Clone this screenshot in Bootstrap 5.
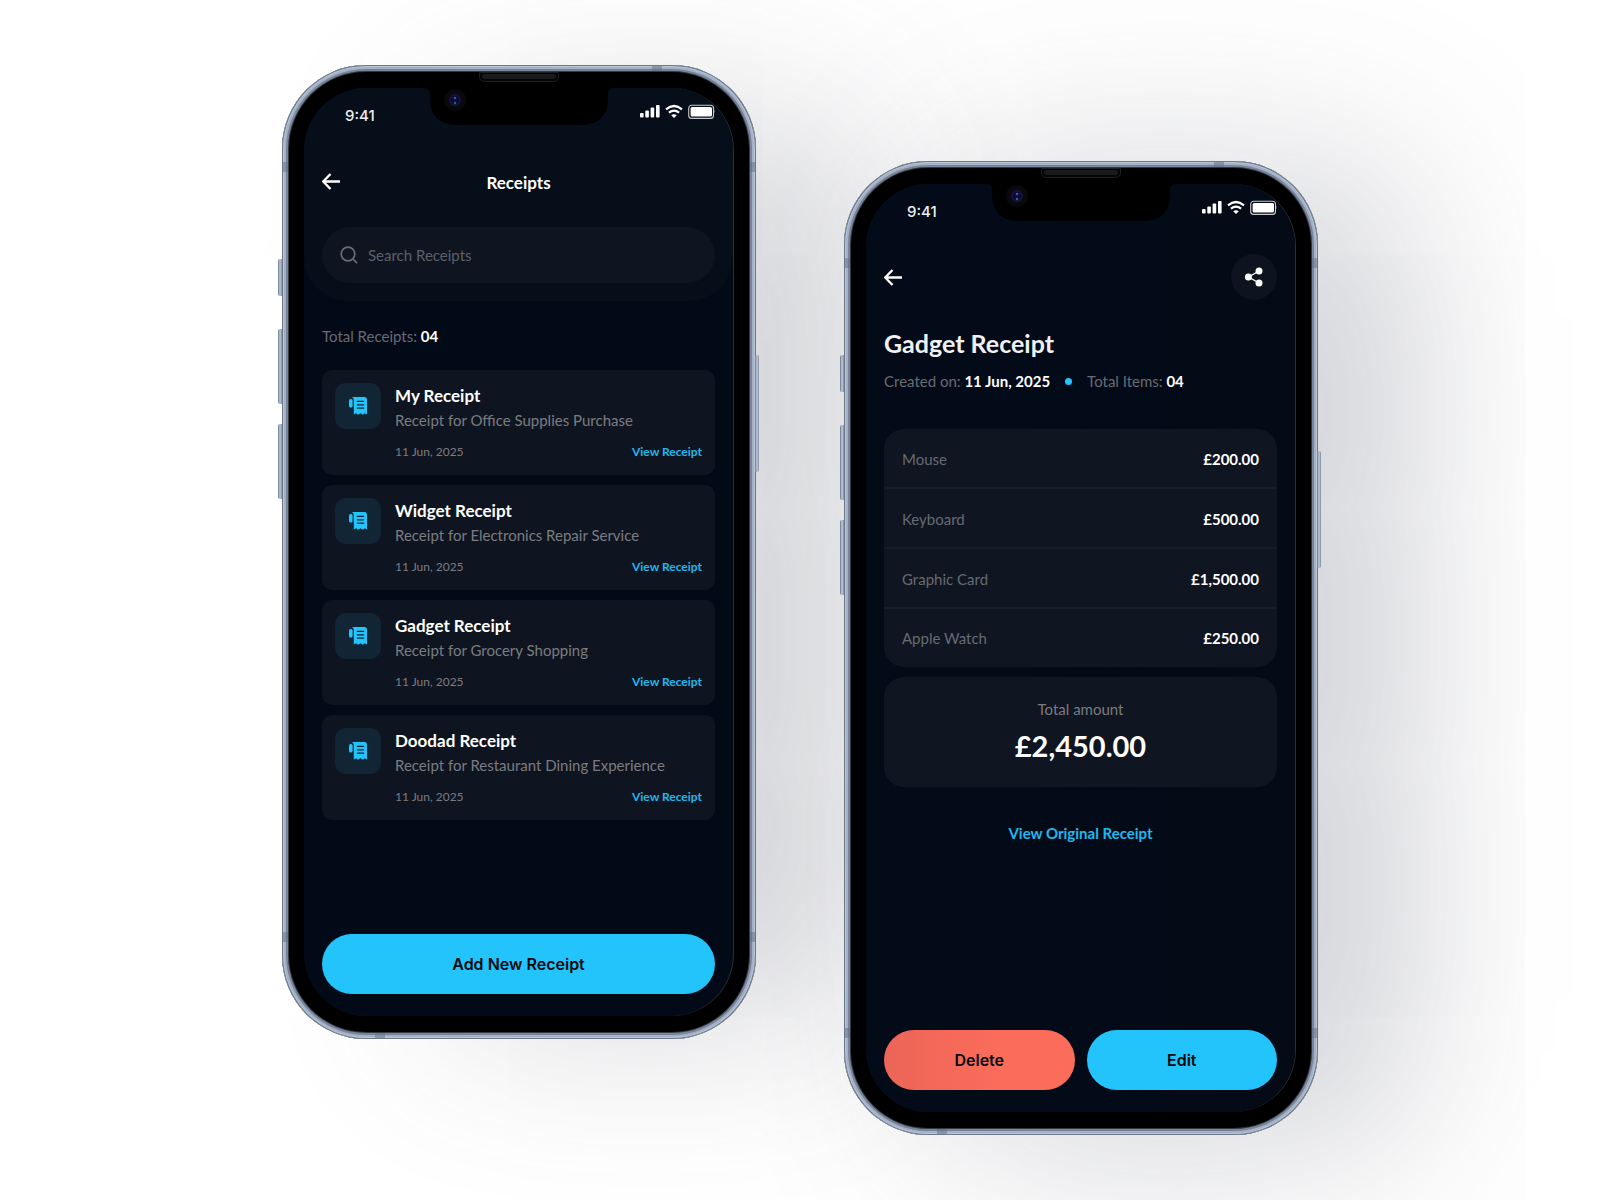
<!DOCTYPE html>
<html lang="en">
<head>
<meta charset="utf-8">
<meta name="viewport" content="width=device-width, initial-scale=1">
<title>Receipts</title>
<link href="https://cdn.jsdelivr.net/npm/bootstrap@5.3.0/dist/css/bootstrap.min.css" rel="stylesheet">
<style>
  :root { --muted: #676b72; --accent: #22c4fb; --panel: #0f1520; }
  body { font-family: Lato, "Open Sans", sans-serif; font-size: 15px; line-height: 20px; color: #fff; background: #fff; overflow-x: hidden; }
  .stage { padding: 65px 16px; gap: 88px; }
  .phone {
    --shade: 130px 20px 180px -40px rgba(88, 92, 108, .29);
    position: relative; width: 474px; padding: 23px 23px 23px 22px; border-radius: 84px; background: #000;
    box-shadow: inset 0 0 0 1px #6c7887, inset 0 0 0 2px #b9c6d8, inset 0 0 0 4px #a3b1c6, inset 0 0 0 6px #77849a, inset 0 0 0 7px #343a44, var(--shade);
  }
  .phone-lower { --shade: 90px 10px 190px rgba(88, 92, 108, .3); margin-top: 96px; }
  .side-key { position: absolute; width: 4px; background: linear-gradient(90deg, #66748a, #c0cddd 50%, #7c8a9d); border-radius: 2px 0 0 2px; }
  .key-l { left: -4px; }
  .key-r { right: -3px; border-radius: 0 2px 2px 0; top: 290px; height: 117px; }
  .key-mute { top: 194px; height: 37px; }
  .key-up { top: 264px; height: 75px; }
  .key-down { top: 359px; height: 75px; }
  .band { position: absolute; background: rgba(95, 112, 130, .5); width: 6px; height: 10px; }
  .band-t { width: 10px; height: 5px; top: 1px; right: 94px; }
  .band-b { width: 10px; height: 5px; bottom: 1px; left: 93px; }
  .band-1 { top: 97px; } .band-2 { bottom: 97px; }
  .band-l { left: 0; } .band-r { right: 0; }
  .screen { position: relative; min-height: 928px; border-radius: 62px; background: #030a17; overflow: hidden; box-shadow: 1px 0 0 #2b2f35; }
  .screen-detail { background: linear-gradient(90deg, #030b19, #040a16); }
  .notch { position: absolute; top: 0; left: 120px; width: 190px; height: 37px; }
  .speaker { position: absolute; top: 7px; left: 197px; width: 80px; height: 10px; border-radius: 0 0 5px 5px; background: #050505; border: 1px solid #1c1e20; z-index: 2; padding: 1px 2px 2px; }
  .speaker::before { content: ""; display: block; height: 5px; border-radius: 3px; background: #191a1b; }
  .top-panel { background: #060e1a; border-radius: 0 0 44px 44px; padding-bottom: 18px; }
  .pad { padding-left: 18px; padding-right: 18px; }
  .status { height: 70px; padding: 16px 17px 0 41px; }
  .clock { font: 500 15px/24px Inter, sans-serif; color: #eceef0; }
  .plain { background: none; border: 0; padding: 0; color: #fff; display: flex; }
  .title-row { height: 46px; }
  .titled { display: grid; grid-template-columns: 20px 1fr 20px; }
  .screen-name { font-size: 17px; line-height: 22px; font-weight: 700; margin: 0; padding-top: 3px; }
  .search { height: 56px; border-radius: 28px; background: var(--panel); padding: 0 18px; gap: 10px; margin-top: 23px; }
  .search input { background: none; border: 0; outline: 0; color: #fff; padding: 0; width: 100%; }
  .search input::placeholder { color: #5b6069; opacity: 1; }
  .muted { color: var(--muted); }
  .soft { color: #7a7c80; }
  .total-line { margin: 25px 0 24px; }
  .entries { gap: 10px; }
  .entry { height: 105px; border-radius: 10px; background: var(--panel); padding: 13px; gap: 14px; }
  .tile { width: 46px; height: 46px; border-radius: 11px; background: #112534; }
  .entry h2 { font-size: 17px; line-height: 24px; font-weight: 700; margin: 1px 0 0; }
  .entry p { margin: 2px 0 0; }
  .foot { font-size: 12px; line-height: 16px; margin-top: 14px; }
  .foot a, .original { color: #20b8ec; font-weight: 700; text-decoration: none; }
  .action { height: 60px; border: 0; border-radius: 30px; background: var(--accent); color: #05090f; font: 600 16px/20px Inter, sans-serif; }
  .action-pair { gap: 12px; }
  .danger { background: linear-gradient(90deg, #ec6558, #fb6c5a 60%); }
  .bottom { padding-bottom: 22px; }
  .share { width: 46px; height: 46px; border-radius: 50%; background: #0e141f; }
  .name { font-size: 25px; line-height: 32px; font-weight: 700; margin: 27px 0 0; color: #f0f1f3; }
  .meta { margin-top: 12px; }
  .spot { width: 7px; height: 7px; border-radius: 50%; background: var(--accent); margin: 0 15px; }
  .items { margin: 38px 0 10px; border-radius: 20px; background: #0f1521; overflow: hidden; width: 100%; border-collapse: separate; border-spacing: 0; }
  .items td, .items th { height: 60px; padding: 2px 18px 0; border-bottom: 2px solid #171d29; font-weight: 400; }
  .items td { font-weight: 700; text-align: right; }
  .items tr:last-child > * { border: 0; height: 58px; padding-top: 0; }
  .sum { border-radius: 20px; background: #0f1521; height: 110px; padding-top: 22px; margin-bottom: 36px; }
  .amount { font-size: 29px; line-height: 36px; font-weight: 700; margin-top: 9px; }
</style>
</head>
<body>
<svg width="0" height="0" class="position-absolute" aria-hidden="true">
  <symbol id="notch" viewBox="0 0 190 37"><path d="M0 0Q6 0 6 7V10Q6 37 33 37H157Q184 37 184 10V7Q184 0 190 0Z" fill="#000"/><circle cx="31" cy="12" r="11" fill="#0a070d"/><circle cx="31" cy="12" r="6" fill="#15133a"/><circle cx="31" cy="12" r="4" fill="#090c2c"/><circle cx="31" cy="10" r="1.3" fill="#4b4bc0"/><circle cx="31" cy="15" r="1.2" fill="#1c6693"/></symbol>
  <symbol id="status" viewBox="0 0 76 16"><g fill="#fff"><rect x="0" y="9" width="3.6" height="4.6" rx="1"/><rect x="5.3" y="6.4" width="3.6" height="7.2" rx="1"/><rect x="10.6" y="3.6" width="3.6" height="10" rx="1"/><rect x="16" y="1" width="3.6" height="12.6" rx="1"/><rect x="50.6" y="3" width="21.4" height="9.6" rx="1.6"/><path d="M74.4 5.6q1.6 1.8 0 3.8z" opacity=".45"/><path d="M31.2 11.2q2.8-2 5.6 0L34 14z"/></g><g fill="none" stroke="#fff" stroke-width="2.2"><path d="M26 5.3q8-6.6 16 0"/><path d="M28.9 8.7q5.1-4 10.2 0"/></g><rect x="48.7" y="1.2" width="24.8" height="13.2" rx="3" fill="none" stroke="#c6c9ce" stroke-width="1.1"/></symbol>
  <symbol id="back" viewBox="0 0 20 20"><path d="M18 10.5H1.5M8.5 3 1.2 10.5 8.5 18" fill="none" stroke="#fff" stroke-width="2.4" stroke-linejoin="round"/></symbol>
  <symbol id="bill" viewBox="0 0 20 20"><rect x="1" y="3" width="3.6" height="8.6" rx="1.6" fill="#22c4fb"/><path d="M4 1H16.4Q19 1 19 4V18.6L16.8 17.2 14.8 18.8 12.4 17.2 10 18.8 8 17.2 5.8 18.6V4.4Q5.8 2 4 1Z" fill="#22c4fb"/><path d="M9.4 5.4H15.6M9.4 8.8H15.6M9.4 12.2H15.6" stroke="#112534" stroke-width="1.3" stroke-linecap="round"/></symbol>
</svg>

<main class="stage d-flex justify-content-center align-items-start">
  <section class="phone flex-shrink-0">
    <i class="side-key key-l key-mute"></i><i class="side-key key-l key-up"></i><i class="side-key key-l key-down"></i><i class="side-key key-r"></i>
    <i class="band band-t"></i><i class="band band-b"></i><i class="band band-l band-1"></i><i class="band band-r band-1"></i><i class="band band-l band-2"></i><i class="band band-r band-2"></i>
    <div class="speaker"></div>
    <div class="screen d-flex flex-column">
      <svg class="notch"><use href="#notch"/></svg>
      <header class="top-panel">
        <div class="status d-flex justify-content-between align-items-start"><span class="clock">9:41</span><svg width="76" height="16"><use href="#status"/></svg></div>
        <div class="pad">
          <div class="title-row titled align-items-center">
            <button class="plain" aria-label="Back"><svg width="20" height="20"><use href="#back"/></svg></button>
            <h1 class="screen-name text-center">Receipts</h1>
          </div>
          <label class="search d-flex align-items-center">
            <svg width="18" height="18" viewBox="0 0 18 18" class="flex-shrink-0" fill="none" stroke="#686c74" stroke-width="1.7" stroke-linecap="round"><circle cx="8" cy="8" r="6.8"/><path d="m13 13 3.6 3.6"/></svg>
            <input type="search" placeholder="Search Receipts" aria-label="Search Receipts">
          </label>
        </div>
      </header>
      <div class="pad bottom d-flex flex-column flex-grow-1">
        <p class="total-line muted">Total Receipts: <b class="text-white">04</b></p>
        <div class="entries d-flex flex-column">
          <article class="entry d-flex"><div class="tile d-flex align-items-center justify-content-center flex-shrink-0"><svg width="20" height="20"><use href="#bill"/></svg></div><div class="flex-grow-1"><h2>My Receipt</h2><p class="soft">Receipt for Office Supplies Purchase</p><div class="foot d-flex justify-content-between"><span class="soft">11 Jun, 2025</span><a href="#">View Receipt</a></div></div></article>
          <article class="entry d-flex"><div class="tile d-flex align-items-center justify-content-center flex-shrink-0"><svg width="20" height="20"><use href="#bill"/></svg></div><div class="flex-grow-1"><h2>Widget Receipt</h2><p class="soft">Receipt for Electronics Repair Service</p><div class="foot d-flex justify-content-between"><span class="soft">11 Jun, 2025</span><a href="#">View Receipt</a></div></div></article>
          <article class="entry d-flex"><div class="tile d-flex align-items-center justify-content-center flex-shrink-0"><svg width="20" height="20"><use href="#bill"/></svg></div><div class="flex-grow-1"><h2>Gadget Receipt</h2><p class="soft">Receipt for Grocery Shopping</p><div class="foot d-flex justify-content-between"><span class="soft">11 Jun, 2025</span><a href="#">View Receipt</a></div></div></article>
          <article class="entry d-flex"><div class="tile d-flex align-items-center justify-content-center flex-shrink-0"><svg width="20" height="20"><use href="#bill"/></svg></div><div class="flex-grow-1"><h2>Doodad Receipt</h2><p class="soft">Receipt for Restaurant Dining Experience</p><div class="foot d-flex justify-content-between"><span class="soft">11 Jun, 2025</span><a href="#">View Receipt</a></div></div></article>
        </div>
        <button class="action mt-auto">Add New Receipt</button>
      </div>
    </div>
  </section>

  <section class="phone phone-lower flex-shrink-0">
    <i class="side-key key-l key-mute"></i><i class="side-key key-l key-up"></i><i class="side-key key-l key-down"></i><i class="side-key key-r"></i>
    <i class="band band-t"></i><i class="band band-b"></i><i class="band band-l band-1"></i><i class="band band-r band-1"></i><i class="band band-l band-2"></i><i class="band band-r band-2"></i>
    <div class="speaker"></div>
    <div class="screen screen-detail d-flex flex-column">
      <svg class="notch"><use href="#notch"/></svg>
      <div class="status d-flex justify-content-between align-items-start"><span class="clock">9:41</span><svg width="76" height="16"><use href="#status"/></svg></div>
      <div class="pad bottom d-flex flex-column flex-grow-1">
        <div class="title-row d-flex justify-content-between align-items-center">
          <button class="plain" aria-label="Back"><svg width="20" height="20"><use href="#back"/></svg></button>
          <button class="plain share align-items-center justify-content-center" aria-label="Share"><svg width="20" height="20" viewBox="0 0 20 20"><path d="M15 4 4.6 10 15 16" fill="none" stroke="#fff" stroke-width="1.3"/><g fill="#fff"><circle cx="15" cy="3.9" r="3.5"/><circle cx="4.4" cy="10" r="3.5"/><circle cx="15" cy="16" r="3.5"/></g></svg></button>
        </div>
        <h1 class="name">Gadget Receipt</h1>
        <div class="meta d-flex align-items-center muted"><span>Created on: <b class="text-white">11 Jun, 2025</b></span><i class="spot"></i><span>Total Items: <b class="text-white">04</b></span></div>
        <table class="items">
          <tbody>
            <tr><th scope="row" class="muted">Mouse</th><td>£200.00</td></tr>
            <tr><th scope="row" class="muted">Keyboard</th><td>£500.00</td></tr>
            <tr><th scope="row" class="muted">Graphic Card</th><td>£1,500.00</td></tr>
            <tr><th scope="row" class="muted">Apple Watch</th><td>£250.00</td></tr>
          </tbody>
        </table>
        <div class="sum text-center"><div class="soft">Total amount</div><div class="amount">£2,450.00</div></div>
        <a href="#" class="original align-self-center">View Original Receipt</a>
        <div class="action-pair d-flex mt-auto"><button class="action danger w-50">Delete</button><button class="action w-50">Edit</button></div>
      </div>
    </div>
  </section>
</main>
<script src="https://cdn.jsdelivr.net/npm/bootstrap@5.3.0/dist/js/bootstrap.bundle.min.js"></script>
</body>
</html>
